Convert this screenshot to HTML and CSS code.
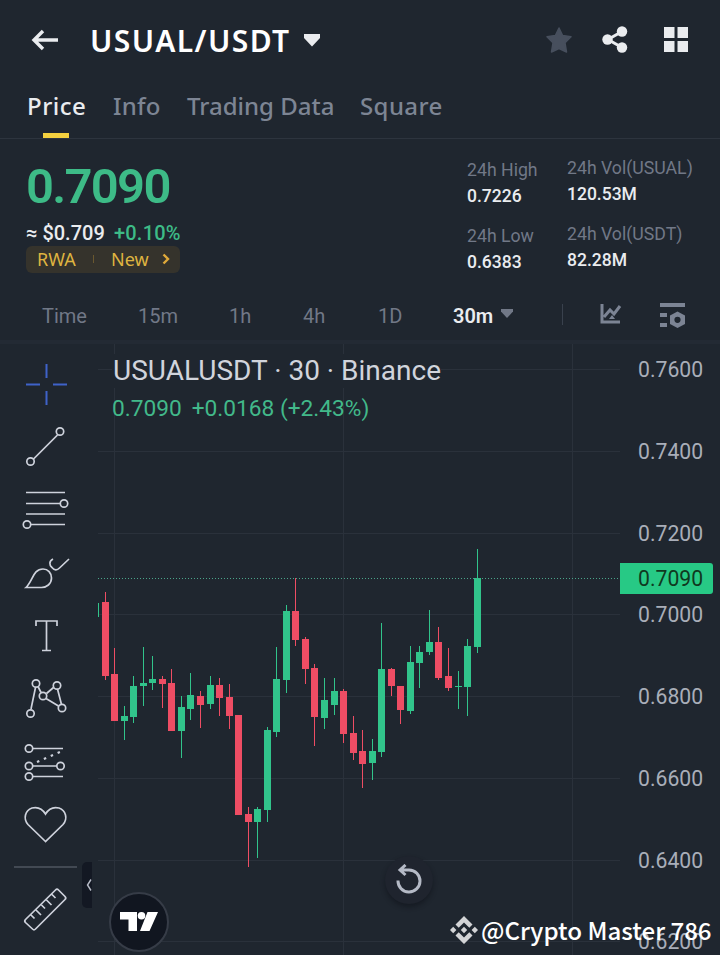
FILE: index.html
```html
<!DOCTYPE html>
<html lang="en">
<head>
  <meta charset="UTF-8">
  <title>USUAL/USDT</title>
  <link rel="stylesheet" href="styles.css">
</head>
<body>
  <header class="topbar">
    <svg class="back" width="28" height="22" viewBox="0 0 28 22"><path d="M12 2L3 11l9 9M3.500 11H27" /></svg>
    <h1>USUAL/USDT</h1>
    <svg class="caret" width="16" height="13" viewBox="0 0 16 13"><path d="M0 0h16v4L8 12.500 0 4z" /></svg>
    <div class="actions">
      <svg width="28" height="28" viewBox="0 0 28 28"><path class="star" d="M14 2l3.600 7.600 8.400 1.200-6 6 1.500 9.200L14 22.500 6.500 26 8 16.800l-6-6 8.400-1.200z" /></svg>
      <svg width="28" height="28" viewBox="0 0 28 28"><path class="share-line" d="M21 5.500L7 13.500l14 8" /><g class="fill"><circle cx="21" cy="5.500" r="5.200" /><circle cx="6.500" cy="13.500" r="5.200" /><circle cx="21" cy="21.500" r="5.200" /></g></svg>
      <svg width="24" height="25" viewBox="0 0 24 25"><path class="fill" d="M0 0h10.500v11H0zM13.500 0H24v11H13.500zM0 14h10.500v11H0zM13.500 14H24v11H13.500z" /></svg>
    </div>
  </header>

  <nav class="tabs">
    <a class="tab active t-price">Price</a>
    <a class="tab t-info">Info</a>
    <a class="tab t-data">Trading Data</a>
    <a class="tab t-square">Square</a>
  </nav>

  <section class="summary">
    <div class="last">
      <div class="price">0.7090</div>
      <div class="sub"><span class="usd">≈ $0.709</span><span class="change">+0.10%</span></div>
      <div class="tags">
        <span class="rwa">RWA</span><i></i><span class="new">New</span>
        <svg width="8" height="12" viewBox="0 0 8 12"><path d="M1.500 1.500L6 6l-4.500 4.500" /></svg>
      </div>
    </div>
    <dl class="stats left">
      <dt>24h High</dt><dd>0.7226</dd>
      <dt>24h Low</dt><dd>0.6383</dd>
    </dl>
    <dl class="stats right">
      <dt>24h Vol(USUAL)</dt><dd>120.53M</dd>
      <dt>24h Vol(USDT)</dt><dd>82.28M</dd>
    </dl>
  </section>

  <nav class="frames">
    <span>Time</span><span>15m</span><span>1h</span><span>4h</span><span>1D</span>
    <span class="current">30m <svg width="12" height="10" viewBox="0 0 12 10"><path d="M0 0h12v2.500L6 9 0 2.500z" /></svg></span>
    <i></i>
    <svg class="ind" width="22" height="22" viewBox="0 0 22 22"><path d="M2 1v18h18M4 14l6-7 4 4 6-8" /><path class="solid" d="M9 16l3-4 3 4z" /></svg>
    <svg class="ind" width="26" height="26" viewBox="0 0 26 26"><path class="solid" d="M0 0h25v4H0zM0 10h7v4H0zM0 20h7v4H0z" /><path class="solid" fill-rule="evenodd" d="M17.500 8.500l7.500 4v8.500l-7.500 4-7.500-4v-8.500zM17.500 13.700a3.100 3.100 0 1 0 0 6.200 3.100 3.100 0 0 0 0-6.200z" /></svg>
  </nav>

  <main class="chart">
    <aside class="tools">
      <svg width="98" height="611" viewBox="0 344 98 611">
        <path class="cross" d="M46.500 364v14M46.500 391v14M26 384.500h14M53 384.500h14" />
        <path d="M33.500 459L57.500 435" /><circle cx="30.500" cy="461.500" r="3.700" /><circle cx="60" cy="431.500" r="3.700" />
        <path d="M26 492.500h39M26 503.500h34M26 514h39M31 524.500h34" /><circle cx="64" cy="503.500" r="3.700" /><circle cx="27" cy="524.500" r="3.700" />
        <path d="M26 587.500C33 581 33 569 43 569c5 0 8.500 4 8.500 9 0 6-5 9.500-10 9.500zM53 559c-4 2-4 6-1 8.500 2.500 3 5 3 7.500.500L69 559" />
        <path d="M36 626v-5h21v5M46.500 621v29.500M42 650.500h9" />
        <path d="M31 709L35.500 687.500M38 686.500L41 692.500M46.500 693.500L53.500 687.500M57.500 689L61.500 704.500M46 698.500L58.500 706" />
        <circle cx="36" cy="683.500" r="3.700" /><circle cx="57" cy="685.500" r="3.700" /><circle cx="43" cy="696" r="3.700" /><circle cx="30.500" cy="713.500" r="3.700" /><circle cx="62" cy="708" r="3.700" />
        <path d="M33 748.500h30M33 766h24M33 776.500h30" /><path class="dots" d="M37 762L61 751.500" />
        <circle cx="29" cy="748.500" r="3.700" /><circle cx="29" cy="766" r="3.700" /><circle cx="60.500" cy="766" r="3.700" /><circle cx="29" cy="776.500" r="3.700" />
        <path d="M45.500 841.500L28 824.500c-5-6-3-14 4-16.500 6-1.500 10.500 1 13.500 6 3-5 7.500-7.500 13.500-6 7 2.500 9 10.500 4 16.500z" />
        <path class="rule" d="M14 867h63" />
        <path d="M25.500 919.500L55.500 890q1.500-1.500 3 0l6.500 6.500q1.500 1.500 0 3l-29.500 29.500q-1.500 1.500-3 0l-7-6.500q-1.500-1.500 0-3zM31 915l3.500 3.500M36 910l5 5M41.500 905l3.500 3.500M46.500 900l5 5M52 894.500l3.500 3.500" />
      </svg>
    </aside>
    <div class="plot">
      <svg id="plot" width="622" height="611" viewBox="98 344 622 611">
        <g id="grid"></g>
        <g id="candles"></g>
        <path class="last-line" d="M98 578.500H620" />
        <path class="last-box" d="M620 563h90q3 0 3 3v25q0 3-3 3h-90z" />
        <text class="last-text" x="638" y="586">0.7090</text>
      </svg>
    </div>

    <div class="legend">
      <div class="symbol">USUALUSDT · 30 · Binance</div>
      <div class="quote"><span>0.7090</span><span>+0.0168 (+2.43%)</span></div>
    </div>
    <div class="collapse"><svg width="6" height="14" viewBox="0 0 6 14"><path d="M5 1.500L1.500 7 5 12.500" /></svg></div>
    <div class="tv"><svg width="38" height="20" viewBox="0 0 38 20"><path d="M0 0h17v19H8.500V7.500H0zM27.500 0H38l-8.500 19H20z" /><circle cx="21.500" cy="3.800" r="3.800" /></svg></div>
    <div class="reset"><svg width="28" height="32" viewBox="0 0 28 32"><path d="M3 16.500A11 11 0 1 0 14 6H5M10.500 1L5 6l5.500 5" /></svg></div>
    <div class="watermark">
      <svg width="28" height="28" viewBox="0 0 28 28"><path d="M14 0l8.500 8.500-3.200 3.200L14 6.400l-5.300 5.300-3.200-3.200zM14 28l8.500-8.500-3.200-3.200-5.300 5.300-5.300-5.300-3.200 3.200zM0 14l3.200-3.200L6.400 14l-3.200 3.200zM21.600 14l3.200-3.200L28 14l-3.200 3.200zM10.800 14l3.200-3.200 3.200 3.200-3.200 3.200z" /></svg>
      <span>@Crypto Master 786</span>
    </div>
  </main>

  <script>
    // left edge, high, body top, body bottom, low, up
    const candles = [
      [102, 592, 602, 676, 680, 0], [111, 648, 674, 721, 721, 0], [121, 706, 716, 721, 740, 1],
      [130, 676, 686, 717, 723, 1], [140, 647, 683, 686, 706, 1], [149, 656, 679, 683, 690, 1],
      [159, 676, 679, 684, 708, 0], [168, 669, 683, 731, 731, 0], [178, 696, 707, 731, 758, 1],
      [187, 673, 695, 709, 720, 1], [197, 691, 696, 705, 728, 0], [207, 676, 685, 704, 709, 1],
      [216, 678, 685, 698, 716, 0], [226, 684, 697, 716, 729, 0], [235, 715, 715, 815, 815, 0],
      [245, 807, 814, 822, 867, 0], [254, 807, 809, 822, 858, 1], [264, 727, 730, 810, 822, 1],
      [273, 647, 679, 732, 737, 1], [283, 605, 611, 680, 693, 1], [292, 578, 611, 640, 646, 0],
      [302, 637, 639, 669, 684, 0], [311, 664, 668, 717, 746, 0], [321, 678, 700, 718, 729, 1],
      [331, 678, 691, 705, 715, 1], [340, 689, 691, 734, 743, 0], [350, 716, 733, 753, 760, 0],
      [359, 730, 751, 764, 788, 0], [369, 739, 751, 763, 780, 1], [378, 623, 669, 752, 757, 1],
      [388, 668, 669, 686, 696, 0], [397, 686, 686, 710, 724, 0], [407, 646, 662, 711, 714, 1],
      [416, 646, 652, 663, 688, 1], [426, 610, 642, 652, 655, 1], [435, 627, 642, 678, 680, 0],
      [445, 648, 676, 688, 691, 0], [455, 671, 686, 687, 709, 1], [464, 639, 646, 687, 716, 1],
      [474, 549, 578, 647, 653, 1]
    ];
    const levels = [
      [369, '0.7600'], [451, '0.7400'], [533, '0.7200'], [614, '0.7000'],
      [696, '0.6800'], [778, '0.6600'], [860, '0.6400'], [941, '0.6200']
    ];

    let grid = '';
    levels.forEach(([y, label]) => {
      grid += `<rect x="98" y="${y}" width="522" height="1"/><text x="638" y="${y + 8}">${label}</text>`;
    });
    [114, 343, 572].forEach(x => {
      grid += `<rect x="${x}" y="344" width="1" height="611"/>`;
    });
    document.getElementById('grid').innerHTML = grid;

    let bars = '<rect class="up" x="98" y="603" width="1" height="14"/>';
    candles.forEach(([x, high, top, bottom, low, up]) => {
      const cls = up ? 'up' : 'down';
      bars += `<rect class="${cls}" x="${x + 3}" y="${high}" width="1" height="${low - high}"/>`;
      bars += `<rect class="${cls}" x="${x}" y="${top}" width="7" height="${bottom - top}"/>`;
    });
    document.getElementById('candles').innerHTML = bars;
  </script>
</body>
</html>
```
FILE: styles.css
```css
* { box-sizing: border-box; }
body { margin: 0; width: 720px; height: 955px; overflow: hidden; background: #1f262f; color: #eaecef; font-family: Roboto, sans-serif; }
svg { display: block; flex: none; }
h1, dl, dd { margin: 0; }

.topbar { display: flex; align-items: center; height: 80px; padding: 0 31px 0 31px; }
.back { fill: none; stroke: #eaecef; stroke-width: 3.4; }
h1 { margin-left: 31px; width: 200px; font: 600 30px "Noto Sans", sans-serif; color: #fff; white-space: nowrap; letter-spacing: 1.4px; }
.caret { margin-left: 14px; fill: #eaecef; }
.actions { display: flex; align-items: center; margin-left: auto; margin-right: 1px; margin-top: -1px; }
.actions svg + svg { margin-left: 28px; }
.actions svg:last-child { margin-left: 35px; }
.star { fill: #474f5d; stroke: #474f5d; stroke-width: 1.5; stroke-linejoin: round; }
.fill { fill: #eaecef; }
.share-line { fill: none; stroke: #eaecef; stroke-width: 3; }

.tabs { display: flex; height: 59px; padding-left: 27px; border-bottom: 1px solid #2d343e; }
.tab { position: relative; margin-right: 27px; font: 500 24px/51px "Noto Sans", sans-serif; color: #7d8594; white-space: nowrap; }
.tab.active { color: #eaecef; }
.tab.active::after { content: ""; position: absolute; left: 16px; bottom: 0; width: 26px; height: 5px; background: #f4d03f; }
.t-price { width: 59px; letter-spacing: 0.5px; }
.t-info { width: 47px; letter-spacing: 0.2px; }
.t-data { width: 146px; }
.t-square { letter-spacing: 0.4px; }

.summary { display: flex; height: 156px; }
.last { width: 467px; padding: 20px 0 0 26px; }
.price { height: 56px; font-size: 49px; font-weight: 600; line-height: 56px; color: #3dbb87; letter-spacing: -1.7px; }
.sub { display: flex; height: 31px; padding-top: 5px; font-size: 20px; line-height: 26px; font-weight: 500; }
.usd { width: 88px; white-space: nowrap; }
.change { color: #3dbb87; letter-spacing: 0.2px; }
.tags { display: flex; align-items: center; width: 154px; height: 27px; padding: 0 0 1px 11px; border-radius: 6px; background: #35332c; color: #dfb440; font: 18px/26px "Noto Sans", sans-serif; }
.tags i { width: 1px; height: 8px; margin: 0 17px 0 17px; background: #6a582f; }
.tags svg { margin-left: 14px; fill: none; stroke: #dfa93a; stroke-width: 2.4; }
.rwa { width: 39px; }
.new { width: 37px; }
.stats { padding-top: 18px; width: 100px; white-space: nowrap; }
.stats.right { width: 140px; padding-top: 16px; }
.stats dt { height: 26px; font-size: 17.7px; line-height: 26px; color: #717887; }
.stats dd { height: 40px; font-size: 17.5px; line-height: 26px; font-weight: 500; }

.frames { display: grid; grid-template-columns: 96px 91px 74px 75px 75px 109px 38px 59px 26px; align-items: center; height: 49px; padding: 0 0 4px 42px; border-bottom: 4px solid #232a34; font-size: 20px; color: #717887; }
.current { display: flex; align-items: center; gap: 8px; color: #eaecef; font-weight: 600; }
.current svg { margin-top: -3px; fill: #717887; }
.frames i { width: 1px; height: 21px; margin-top: -3px; background: #39414d; }
.ind { margin-top: -3px; fill: none; stroke: #7c8494; stroke-width: 3; }
.ind:last-child { margin: 0 0 0 1px; }
.ind .solid { fill: #7c8494; stroke: none; }

.chart { position: relative; display: flex; height: 611px; }
.tools svg { fill: none; stroke: #ced2dc; stroke-width: 1.7; }
.tools .cross { stroke: #3f62c9; stroke-width: 2; }
.tools .dots { stroke-width: 2.2; stroke-dasharray: 2.5 5; }
.tools .rule { stroke: #424953; stroke-width: 2; }
#grid rect { fill: #2a313b; }
#grid text { font-size: 21.2px; fill: #a9aeb9; }
.up { fill: #31c48b; }
.down { fill: #ee4d64; }
.last-line { stroke: #4aa58a; stroke-dasharray: 1 2; }
.last-box { fill: #27c985; }
.last-text { font-size: 21.2px; fill: #10391f; }

.legend { position: absolute; left: 109px; top: 6px; padding: 4px 3px; }
.symbol { padding-left: 1px; background: #1f262f; font-size: 28px; line-height: 34px; color: #d1d4dc; }
.quote { display: flex; gap: 10px; font-size: 22.7px; line-height: 42px; color: #42b98a; }
.collapse { position: absolute; left: 82px; top: 518px; width: 10px; height: 46px; padding: 16px 0 0 4px; border-radius: 5px 0 0 5px; background: #131823; }
.collapse svg { fill: none; stroke: #b8bdc9; stroke-width: 1.4; }
.tv { position: absolute; left: 109px; top: 548px; display: flex; align-items: center; justify-content: center; width: 60px; height: 60px; border: 2px solid #363c47; border-radius: 50%; background: #111620; }
.tv svg { fill: #fff; }
.reset { position: absolute; left: 385px; top: 512px; display: flex; align-items: center; justify-content: center; width: 48px; height: 48px; border-radius: 50%; background: #1f242e; box-shadow: 0 3px 5px rgba(10, 14, 20, 0.45); }
.reset svg { fill: none; stroke: #b5bac6; stroke-width: 3; }
.watermark { position: absolute; left: 450px; top: 567px; display: flex; align-items: center; gap: 3px; height: 38px; font: 500 24.1px/38px "Noto Sans CJK SC", sans-serif; color: #fff; white-space: nowrap; }
.watermark svg { fill: #d3d4d6; }
```
